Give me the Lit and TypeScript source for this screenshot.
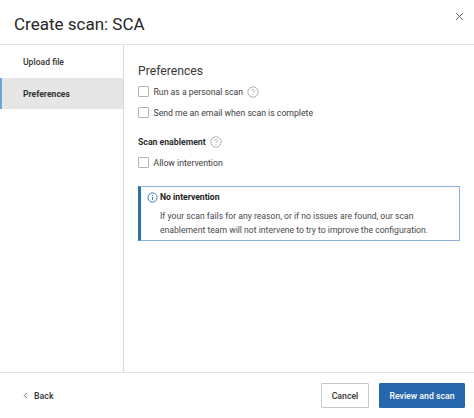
import { LitElement, html, css } from "lit";
import { customElement } from "lit/decorators.js";

const help = html`<svg class="help" viewBox="0 0 12 12" width="12" height="12"><circle cx="6" cy="6" r="5.2" fill="none" stroke="#a8a8a8" stroke-width=".9"/><path d="M4.6 4.7a1.4 1.4 0 1 1 2.2 1.2c-.5.3-.8.6-.8 1.2" fill="none" stroke="#a8a8a8" stroke-width=".9"/><circle cx="6" cy="8.8" r=".55" fill="#a8a8a8"/></svg>`;

@customElement("app-root")
export class AppRoot extends LitElement {
  static styles = css`
    :host { display: flex; flex-direction: column; width: 474px; height: 418px; background: #fff; font-family: Roboto, "Liberation Sans", sans-serif; color: #2a2a2a; overflow: hidden; }
    header { height: 45px; flex: none; display: flex; align-items: center; justify-content: space-between; padding: 4px 10px 0 14px; box-sizing: border-box; border-bottom: 1px solid #e4e4e4; }
    h1 { margin: 0; font-size: 17px; font-weight: 400; color: #262626; }
    .close { display: block; margin-top: -15px; }
    .main { flex: 1; min-height: 0; display: flex; }
    nav { width: 124px; flex: none; border-right: 1px solid #dcdcdc; box-sizing: border-box; }
    .tab { height: 31px; display: flex; align-items: center; padding-left: 23px; font-size: 8.6px; font-weight: 500; color: #333; }
    .tab:first-child { height: 33px; }
    .tab.active { background: #e6e6e6; box-shadow: inset 2px 0 0 #6fa3dc; font-weight: 700; }
    .content { flex: 1; padding: 18px 14px 0 14px; min-width: 0; }
    h2 { margin: 0 0 1px; font-size: 12.2px; line-height: 17px; font-weight: 400; color: #3a3a3a; }
    .row { display: flex; align-items: center; gap: 5px; height: 21px; font-size: 8.7px; color: #3d3d3d; }
    .box { width: 8.5px; height: 8.5px; border: 1px solid #b4b4b4; border-radius: 1px; background: #fff; flex: none; }
    .help { margin-left: -1px; flex: none; }
    .section { display: flex; align-items: center; gap: 4px; margin-top: 10px; height: 18px; font-size: 8.7px; font-weight: 700; color: #2e2e2e; }
    .section .help { margin-left: 0; }
    .section + .row { margin-top: 1px; }
    .notice { margin-top: 13px; width: 322px; height: 55px; box-sizing: border-box; border: 1px solid #8db2d8; border-left: 3px solid #2f6fae; padding: 3px 8px 0 6px; display: grid; grid-template-columns: 11px 1fr; grid-template-rows: 15px auto; column-gap: 2px; align-items: center; }
    .notice b { font-size: 8.6px; font-weight: 700; color: #222; line-height: 15px; }
    .notice p { grid-column: 2; margin: 1px 0 0; font-size: 8.65px; line-height: 14.5px; color: #4a4a4a; white-space: nowrap; }
    footer { height: 46px; flex: none; box-sizing: border-box; border-top: 1px solid #e4e4e4; display: flex; align-items: center; justify-content: space-between; padding: 0 9px 0 23px; }
    .back { display: flex; align-items: center; gap: 6px; font-size: 8.8px; font-weight: 500; color: #333; }
    .actions { display: flex; gap: 10px; }
    button { height: 25px; font: 500 8.7px Roboto, "Liberation Sans", sans-serif; border-radius: 1px; padding: 0; }
    .cancel { width: 48px; background: #fff; border: 1px solid #c8c8c8; color: #333; }
    .primary { width: 86px; background: #2767ab; border: 1px solid #2767ab; color: #fff; }
  `;

  render() {
    return html`
      <header>
        <h1>Create scan: SCA</h1>
        <svg class="close" viewBox="0 0 9 9" width="9" height="9"><path d="M1 1l7 7M8 1L1 8" stroke="#666" stroke-width="1" fill="none"/></svg>
      </header>
      <div class="main">
        <nav>
          <div class="tab">Upload file</div>
          <div class="tab active">Preferences</div>
        </nav>
        <div class="content">
          <h2>Preferences</h2>
          <div class="row"><span class="box"></span>Run as a personal scan ${help}</div>
          <div class="row"><span class="box"></span>Send me an email when scan is complete</div>
          <div class="section">Scan enablement ${help}</div>
          <div class="row"><span class="box"></span>Allow intervention</div>
          <div class="notice">
            <svg viewBox="0 0 12 12" width="11" height="11"><circle cx="6" cy="6" r="5" fill="none" stroke="#2f6fae" stroke-width="1"/><path d="M6 5.4v3.2" stroke="#2f6fae" stroke-width="1"/><circle cx="6" cy="3.6" r=".6" fill="#2f6fae"/></svg>
            <b>No intervention</b>
            <p>If your scan fails for any reason, or if no issues are found, our scan<br>enablement team will not intervene to try to improve the configuration.</p>
          </div>
        </div>
      </div>
      <footer>
        <div class="back"><svg viewBox="0 0 6 8" width="5" height="7"><path d="M4.5 1L1.5 4l3 3" stroke="#555" stroke-width="1" fill="none"/></svg>Back</div>
        <div class="actions"><button class="cancel">Cancel</button><button class="primary">Review and scan</button></div>
      </footer>
    `;
  }
}
